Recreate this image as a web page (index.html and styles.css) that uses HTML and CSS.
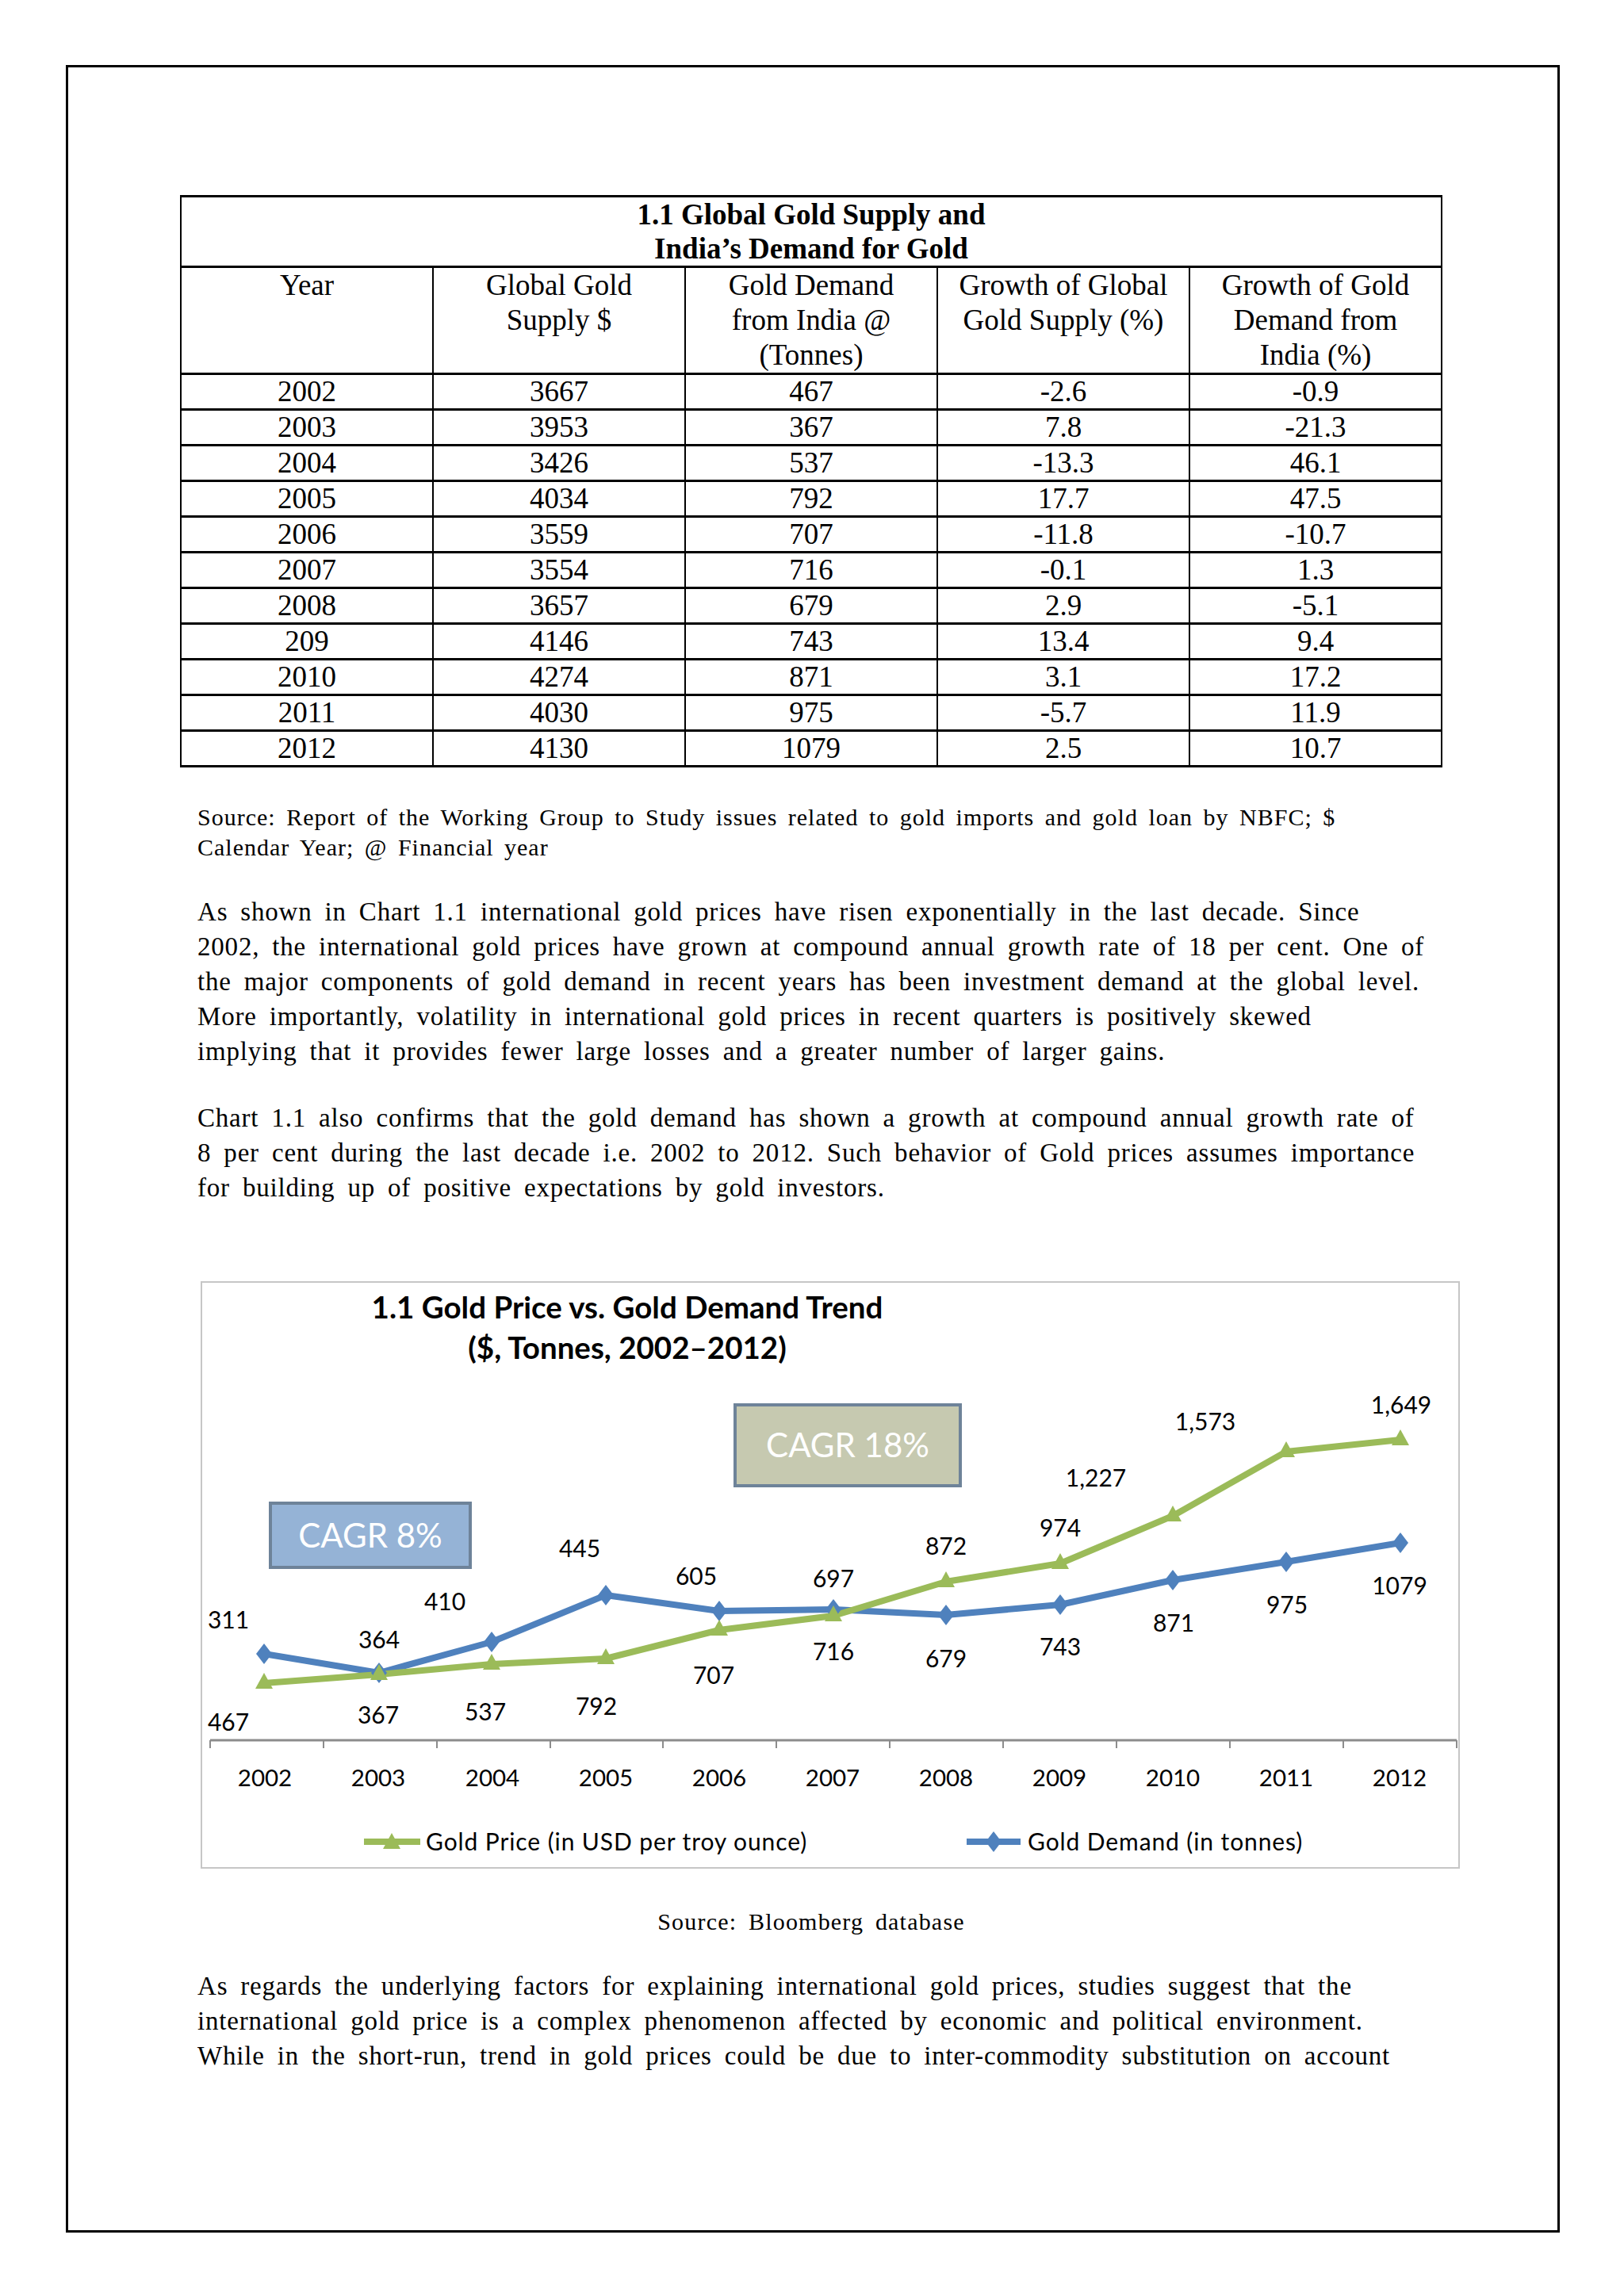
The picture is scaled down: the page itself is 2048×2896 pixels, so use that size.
FILE: index.html
```html
<!DOCTYPE html>
<html lang="en">
<head>
<meta charset="utf-8">
<title>Global Gold Supply and India's Demand for Gold</title>
<link rel="stylesheet" href="styles.css">
</head>
<body>
<div class="page">
  <table class="gold-table">
    <tr class="title-row">
      <th colspan="5">1.1 Global Gold Supply and<br>India’s Demand for Gold</th>
    </tr>
    <tr class="head-row">
      <td>Year</td>
      <td>Global Gold<br>Supply $</td>
      <td>Gold Demand<br>from India @<br>(Tonnes)</td>
      <td>Growth of Global<br>Gold Supply (%)</td>
      <td>Growth of Gold<br>Demand from<br>India (%)</td>
    </tr>
    <tr><td>2002</td><td>3667</td><td>467</td><td>-2.6</td><td>-0.9</td></tr>
    <tr><td>2003</td><td>3953</td><td>367</td><td>7.8</td><td>-21.3</td></tr>
    <tr><td>2004</td><td>3426</td><td>537</td><td>-13.3</td><td>46.1</td></tr>
    <tr><td>2005</td><td>4034</td><td>792</td><td>17.7</td><td>47.5</td></tr>
    <tr><td>2006</td><td>3559</td><td>707</td><td>-11.8</td><td>-10.7</td></tr>
    <tr><td>2007</td><td>3554</td><td>716</td><td>-0.1</td><td>1.3</td></tr>
    <tr><td>2008</td><td>3657</td><td>679</td><td>2.9</td><td>-5.1</td></tr>
    <tr><td>209</td><td>4146</td><td>743</td><td>13.4</td><td>9.4</td></tr>
    <tr><td>2010</td><td>4274</td><td>871</td><td>3.1</td><td>17.2</td></tr>
    <tr><td>2011</td><td>4030</td><td>975</td><td>-5.7</td><td>11.9</td></tr>
    <tr><td>2012</td><td>4130</td><td>1079</td><td>2.5</td><td>10.7</td></tr>
  </table>

  <p class="source">Source: Report of the Working Group to Study issues related to gold imports and gold loan by NBFC; $<br>Calendar Year; @ Financial year</p>

  <p class="para para-first">As shown in Chart 1.1 international gold prices have risen exponentially in the last decade. Since<br>2002, the international gold prices have grown at compound annual growth rate of 18 per cent. One of<br>the major components of gold demand in recent years has been investment demand at the global level.<br>More importantly, volatility in international gold prices in recent quarters is positively skewed<br>implying that it provides fewer large losses and a greater number of larger gains.</p>

  <p class="para para-second">Chart 1.1 also confirms that the gold demand has shown a growth at compound annual growth rate of<br>8 per cent during the last decade i.e. 2002 to 2012. Such behavior of Gold prices assumes importance<br>for building up of positive expectations by gold investors.</p>

  <div class="chart">
    <svg class="chart-svg" width="1588" height="741" viewBox="0 0 1588 741" xmlns="http://www.w3.org/2000/svg">
      <text class="c-title" x="538" y="47">1.1 Gold Price vs. Gold Demand Trend</text>
      <text class="c-title" x="538" y="98">($, Tonnes, 2002–2012)</text>

      <rect class="cagr18" x="674" y="156" width="284" height="102"/>
      <text class="cagr-text" x="816" y="222">CAGR 18%</text>
      <rect class="cagr8" x="88" y="280" width="252" height="81"/>
      <text class="cagr-text" x="214" y="336">CAGR 8%</text>

      <line class="axis" x1="12" y1="579" x2="1584" y2="579"/>
      <g class="ticks">
        <line x1="12" y1="579" x2="12" y2="589"/>
        <line x1="155" y1="579" x2="155" y2="589"/>
        <line x1="298" y1="579" x2="298" y2="589"/>
        <line x1="441" y1="579" x2="441" y2="589"/>
        <line x1="583" y1="579" x2="583" y2="589"/>
        <line x1="726" y1="579" x2="726" y2="589"/>
        <line x1="869" y1="579" x2="869" y2="589"/>
        <line x1="1012" y1="579" x2="1012" y2="589"/>
        <line x1="1155" y1="579" x2="1155" y2="589"/>
        <line x1="1298" y1="579" x2="1298" y2="589"/>
        <line x1="1441" y1="579" x2="1441" y2="589"/>
        <line x1="1584" y1="579" x2="1584" y2="589"/>
      </g>

      <polyline class="line-blue" points="80,470 225,494 367,455 511,396 654,416 798,414 940,421 1084,408 1226,377 1369,354 1513,330"/>
      <polyline class="line-green" points="80,507 225,496 367,483 511,476 654,440 798,422 940,379 1084,356 1226,296 1369,215 1513,200"/>

      <g class="diamonds">
        <path d="M80 457 L90 470 L80 483 L70 470 Z"/>
        <path d="M225 481 L235 494 L225 507 L215 494 Z"/>
        <path d="M367 442 L377 455 L367 468 L357 455 Z"/>
        <path d="M511 383 L521 396 L511 409 L501 396 Z"/>
        <path d="M654 403 L664 416 L654 429 L644 416 Z"/>
        <path d="M798 401 L808 414 L798 427 L788 414 Z"/>
        <path d="M940 408 L950 421 L940 434 L930 421 Z"/>
        <path d="M1084 395 L1094 408 L1084 421 L1074 408 Z"/>
        <path d="M1226 364 L1236 377 L1226 390 L1216 377 Z"/>
        <path d="M1369 341 L1379 354 L1369 367 L1359 354 Z"/>
        <path d="M1513 317 L1523 330 L1513 343 L1503 330 Z"/>
      </g>
      <g class="triangles">
        <path d="M80 494 L91 514 L69 514 Z"/>
        <path d="M225 483 L236 503 L214 503 Z"/>
        <path d="M367 470 L378 490 L356 490 Z"/>
        <path d="M511 463 L522 483 L500 483 Z"/>
        <path d="M654 427 L665 447 L643 447 Z"/>
        <path d="M798 409 L809 429 L787 429 Z"/>
        <path d="M940 366 L951 386 L929 386 Z"/>
        <path d="M1084 343 L1095 363 L1073 363 Z"/>
        <path d="M1226 283 L1237 303 L1215 303 Z"/>
        <path d="M1369 202 L1380 222 L1358 222 Z"/>
        <path d="M1513 187 L1524 207 L1502 207 Z"/>
      </g>

      <g class="labels">
        <text x="35" y="438">311</text>
        <text x="225" y="463">364</text>
        <text x="308" y="415">410</text>
        <text x="478" y="348">445</text>
        <text x="625" y="383">605</text>
        <text x="798" y="386">697</text>
        <text x="940" y="345">872</text>
        <text x="1084" y="322">974</text>
        <text x="1129" y="259">1,227</text>
        <text x="1267" y="188">1,573</text>
        <text x="1514" y="167">1,649</text>
        <text x="1512" y="395">1079</text>
        <text x="1370" y="419">975</text>
        <text x="1227" y="442">871</text>
        <text x="1084" y="472">743</text>
        <text x="940" y="487">679</text>
        <text x="798" y="478">716</text>
        <text x="647" y="508">707</text>
        <text x="499" y="547">792</text>
        <text x="359" y="554">537</text>
        <text x="224" y="558">367</text>
        <text x="35" y="567">467</text>
      </g>

      <g class="years">
        <text x="81" y="637">2002</text>
        <text x="224" y="637">2003</text>
        <text x="368" y="637">2004</text>
        <text x="511" y="637">2005</text>
        <text x="654" y="637">2006</text>
        <text x="797" y="637">2007</text>
        <text x="940" y="637">2008</text>
        <text x="1083" y="637">2009</text>
        <text x="1226" y="637">2010</text>
        <text x="1369" y="637">2011</text>
        <text x="1512" y="637">2012</text>
      </g>

      <line class="leg-green" x1="206" y1="707" x2="277" y2="707"/>
      <path class="tri-fill" d="M241 696 L252 716 L230 716 Z"/>
      <text class="legend" x="284" y="718">Gold Price (in USD per troy ounce)</text>
      <line class="leg-blue" x1="966" y1="707" x2="1034" y2="707"/>
      <path class="dia-fill" d="M1000 694 L1010 707 L1000 720 L990 707 Z"/>
      <text class="legend" x="1043" y="718">Gold Demand (in tonnes)</text>
    </svg>
  </div>

  <p class="chart-source">Source: Bloomberg database</p>

  <p class="para para-third">As regards the underlying factors for explaining international gold prices, studies suggest that the<br>international gold price is a complex phenomenon affected by economic and political environment.<br>While in the short-run, trend in gold prices could be due to inter-commodity substitution on account</p>
</div>
</body>
</html>
```

FILE: styles.css
```css
html, body {
  margin: 0;
  padding: 0;
  background: #ffffff;
}

body {
  width: 2048px;
  min-height: 2896px;
  font-family: "Liberation Serif", "Times New Roman", serif;
  color: #000;
}

.page {
  box-sizing: border-box;
  width: 1884px;
  height: 2734px;
  margin: 82px 0 0 83px;
  border: 3px solid #000;
  padding: 161px 0 0 141px;
}

.gold-table {
  width: 1592px;
  border-collapse: collapse;
  table-layout: fixed;
  font-family: "Liberation Serif", "Times New Roman", serif;
  font-size: 37px;
  line-height: 44px;
  text-align: center;
}

.gold-table th,
.gold-table td {
  border-left: 2px solid #000;
  border-right: 2px solid #000;
  border-top: 3px solid #000;
  border-bottom: 3px solid #000;
  padding: 0;
  vertical-align: middle;
}

.gold-table .title-row th {
  font-weight: bold;
  line-height: 43px;
}

.gold-table .head-row td {
  vertical-align: top;
  line-height: 44px;
}

.gold-table tr {
  height: 45px;
}

.gold-table td {
  height: 42px;
  line-height: 40px;
}

.source {
  margin: 44px 0 0 22px;
  font-size: 30px;
  line-height: 38px;
  letter-spacing: 1px;
  word-spacing: 5px;
  white-space: nowrap;
}

.para {
  margin: 0 0 0 22px;
  font-size: 33px;
  line-height: 44px;
  letter-spacing: 0.8px;
  word-spacing: 7px;
  white-space: nowrap;
}

.para-first {
  margin-top: 40px;
}

.para-second {
  margin-top: 40px;
}

.chart {
  box-sizing: border-box;
  width: 1588px;
  height: 741px;
  margin: 96px 0 0 26px;
  border: 2px solid #c6c6c6;
  position: relative;
}

.chart-svg {
  display: block;
  position: absolute;
  left: -2px;
  top: -2px;
}

.c-title {
  font-family: Lato, "Open Sans", sans-serif;
  font-weight: bold;
  font-size: 38.5px;
  text-anchor: middle;
  fill: #000;
}

.cagr18 {
  fill: #c6c9b0;
  stroke: #6e8399;
  stroke-width: 4;
}

.cagr8 {
  fill: #95b3d6;
  stroke: #6e8399;
  stroke-width: 4;
}

.cagr-text {
  font-family: Lato, "Open Sans", sans-serif;
  font-size: 42px;
  fill: #ffffff;
  text-anchor: middle;
}

.axis {
  stroke: #8c8c8c;
  stroke-width: 3;
}

.ticks line {
  stroke: #8c8c8c;
  stroke-width: 2;
}

.line-blue {
  fill: none;
  stroke: #4f81bd;
  stroke-width: 8;
  stroke-linejoin: round;
}

.line-green {
  fill: none;
  stroke: #9bbb59;
  stroke-width: 8;
  stroke-linejoin: round;
}

.diamonds path,
.dia-fill {
  fill: #4f81bd;
}

.triangles path,
.tri-fill {
  fill: #9bbb59;
}

.labels text,
.years text {
  font-family: Lato, "Open Sans", sans-serif;
  font-size: 30px;
  text-anchor: middle;
  fill: #000;
}

.years text {
  font-size: 29.5px;
}

.leg-green {
  stroke: #9bbb59;
  stroke-width: 8;
}

.leg-blue {
  stroke: #4f81bd;
  stroke-width: 8;
}

.legend {
  font-family: Lato, "Open Sans", sans-serif;
  font-size: 30px;
  letter-spacing: 0.9px;
  fill: #000;
}

.chart-source {
  width: 1592px;
  margin: 48px 0 0 0;
  text-align: center;
  font-size: 30px;
  line-height: 38px;
  letter-spacing: 1.2px;
  word-spacing: 6px;
}

.para-third {
  margin-top: 40px;
}
```
